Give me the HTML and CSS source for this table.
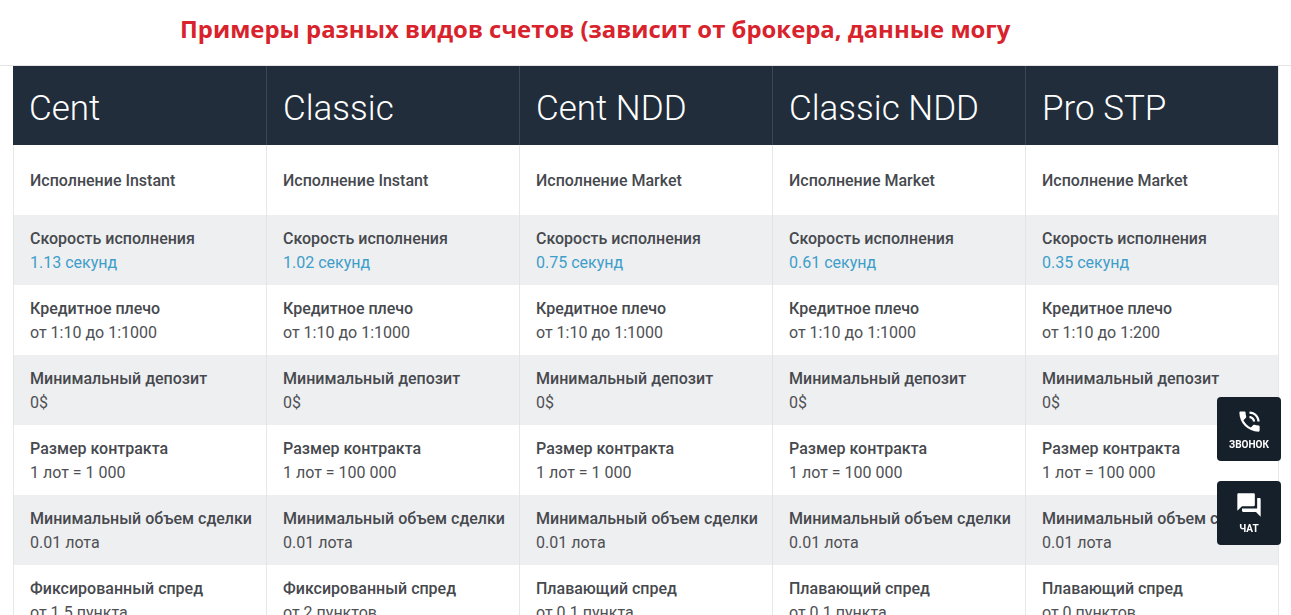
FILE: index.html
```html
<!DOCTYPE html>
<html lang="ru">
<head>
<meta charset="utf-8">
<title>Виды счетов</title>
<link rel="stylesheet" href="styles.css">
</head>
<body>
<header class="top">
  <h1 class="title">Примеры разных видов счетов (зависит от брокера, данные могу</h1>
</header>
<main class="wrap">
  <div class="table">
    <div class="th">Cent</div>
    <div class="th">Classic</div>
    <div class="th">Cent NDD</div>
    <div class="th">Classic NDD</div>
    <div class="th">Pro STP</div>

    <div class="td"><span class="lbl">Исполнение Instant</span></div>
    <div class="td"><span class="lbl">Исполнение Instant</span></div>
    <div class="td"><span class="lbl">Исполнение Market</span></div>
    <div class="td"><span class="lbl">Исполнение Market</span></div>
    <div class="td"><span class="lbl">Исполнение Market</span></div>

    <div class="td alt"><span class="lbl">Скорость исполнения</span><span class="val blue">1.13 секунд</span></div>
    <div class="td alt"><span class="lbl">Скорость исполнения</span><span class="val blue">1.02 секунд</span></div>
    <div class="td alt"><span class="lbl">Скорость исполнения</span><span class="val blue">0.75 секунд</span></div>
    <div class="td alt"><span class="lbl">Скорость исполнения</span><span class="val blue">0.61 секунд</span></div>
    <div class="td alt"><span class="lbl">Скорость исполнения</span><span class="val blue">0.35 секунд</span></div>

    <div class="td"><span class="lbl">Кредитное плечо</span><span class="val">от 1:10 до 1:1000</span></div>
    <div class="td"><span class="lbl">Кредитное плечо</span><span class="val">от 1:10 до 1:1000</span></div>
    <div class="td"><span class="lbl">Кредитное плечо</span><span class="val">от 1:10 до 1:1000</span></div>
    <div class="td"><span class="lbl">Кредитное плечо</span><span class="val">от 1:10 до 1:1000</span></div>
    <div class="td"><span class="lbl">Кредитное плечо</span><span class="val">от 1:10 до 1:200</span></div>

    <div class="td alt"><span class="lbl">Минимальный депозит</span><span class="val">0$</span></div>
    <div class="td alt"><span class="lbl">Минимальный депозит</span><span class="val">0$</span></div>
    <div class="td alt"><span class="lbl">Минимальный депозит</span><span class="val">0$</span></div>
    <div class="td alt"><span class="lbl">Минимальный депозит</span><span class="val">0$</span></div>
    <div class="td alt"><span class="lbl">Минимальный депозит</span><span class="val">0$</span></div>

    <div class="td"><span class="lbl">Размер контракта</span><span class="val">1 лот = 1 000</span></div>
    <div class="td"><span class="lbl">Размер контракта</span><span class="val">1 лот = 100 000</span></div>
    <div class="td"><span class="lbl">Размер контракта</span><span class="val">1 лот = 1 000</span></div>
    <div class="td"><span class="lbl">Размер контракта</span><span class="val">1 лот = 100 000</span></div>
    <div class="td"><span class="lbl">Размер контракта</span><span class="val">1 лот = 100 000</span></div>

    <div class="td alt"><span class="lbl">Минимальный объем сделки</span><span class="val">0.01 лота</span></div>
    <div class="td alt"><span class="lbl">Минимальный объем сделки</span><span class="val">0.01 лота</span></div>
    <div class="td alt"><span class="lbl">Минимальный объем сделки</span><span class="val">0.01 лота</span></div>
    <div class="td alt"><span class="lbl">Минимальный объем сделки</span><span class="val">0.01 лота</span></div>
    <div class="td alt"><span class="lbl">Минимальный объем сделки</span><span class="val">0.01 лота</span></div>

    <div class="td"><span class="lbl">Фиксированный спред</span><span class="val">от 1.5 пункта</span></div>
    <div class="td"><span class="lbl">Фиксированный спред</span><span class="val">от 2 пунктов</span></div>
    <div class="td"><span class="lbl">Плавающий спред</span><span class="val">от 0.1 пункта</span></div>
    <div class="td"><span class="lbl">Плавающий спред</span><span class="val">от 0.1 пункта</span></div>
    <div class="td"><span class="lbl">Плавающий спред</span><span class="val">от 0 пунктов</span></div>
  </div>
</main>

<aside class="float">
  <a class="fbtn">
    <svg class="ico" viewBox="0 0 24 24" width="27" height="27"><path fill="#fff" d="M20 15.5c-1.25 0-2.45-.2-3.57-.57-.35-.11-.74-.03-1.02.24l-2.2 2.2c-2.83-1.44-5.15-3.75-6.59-6.59l2.2-2.21c.28-.26.36-.65.25-1C8.7 6.45 8.5 5.25 8.5 4c0-.55-.45-1-1-1H4c-.55 0-1 .45-1 1 0 9.39 7.61 17 17 17 .55 0 1-.45 1-1v-3.5c0-.55-.45-1-1-1zM19 12h2c0-4.97-4.03-9-9-9v2c3.87 0 7 3.13 7 7zm-4 0h2c0-2.76-2.24-5-5-5v2c1.66 0 3 1.34 3 3z"/></svg>
    <span class="ftxt">ЗВОНОК</span>
  </a>
  <a class="fbtn">
    <svg class="ico" viewBox="0 0 24 24" width="28" height="28"><path fill="#fff" d="M21 6h-2v9H6v2c0 .55.45 1 1 1h11l4 4V7c0-.55-.45-1-1-1zm-4 6V3c0-.55-.45-1-1-1H3c-.55 0-1 .45-1 1v14l4-4h10c.55 0 1-.45 1-1z"/></svg>
    <span class="ftxt">ЧАТ</span>
  </a>
</aside>
</body>
</html>
```

FILE: styles.css
```css
html, body {
  margin: 0;
  padding: 0;
  background: #ffffff;
  font-family: Roboto, "Liberation Sans", sans-serif;
  overflow: hidden;
}

.top {
  height: 66px;
  border-bottom: 1px solid #e4e4e4;
  box-sizing: border-box;
  padding-left: 180px;
  display: flex;
  align-items: center;
}

.title {
  margin: 0;
  padding-bottom: 9px;
  font-family: "Open Sans", "Noto Sans", sans-serif;
  font-weight: 700;
  font-size: 23.9px;
  color: #d8222c;
  white-space: nowrap;
  letter-spacing: 0;
}

.wrap {
  padding-left: 13px;
}

.table {
  display: grid;
  grid-template-columns: repeat(5, 253px);
  grid-auto-rows: 70px;
  grid-template-rows: 79px;
  width: 1266px;
  border-right: 1px solid #e6e7e9;
  box-sizing: border-box;
}

.th {
  background: #212d3b;
  color: #ffffff;
  font-weight: 300;
  font-size: 35px;
  display: flex;
  align-items: center;
  padding: 5px 16px 0;
  border-left: 1px solid #3c4755;
}
.th:first-child { border-left: none; }

.td {
  display: flex;
  flex-direction: column;
  justify-content: center;
  padding: 1px 16px 0;
  border-left: 1px solid #e6e7e9;
  background: #ffffff;
  font-size: 16px;
  line-height: 24px;
}
.td.alt {
  background: #eeeff1;
  border-left-color: #e3e4e6;
}

.lbl {
  font-weight: 500;
  color: #46494e;
  white-space: nowrap;
}
.val {
  font-weight: 400;
  color: #4e5054;
  white-space: nowrap;
}
.val.blue {
  color: #3d9ec9;
}

.float {
  position: fixed;
  top: 397px;
  right: 10px;
  display: flex;
  flex-direction: column;
  gap: 20px;
}
.fbtn {
  width: 64px;
  height: 64px;
  background: #16202b;
  border-radius: 4px;
  display: flex;
  flex-direction: column;
  align-items: center;
  justify-content: center;
  gap: 4px;
  box-sizing: border-box;
}
.ico { display: block; }
.ftxt {
  color: #ffffff;
  font-family: Roboto, "Liberation Sans", sans-serif;
  font-weight: 700;
  font-size: 10px;
  line-height: 12px;
}
```
